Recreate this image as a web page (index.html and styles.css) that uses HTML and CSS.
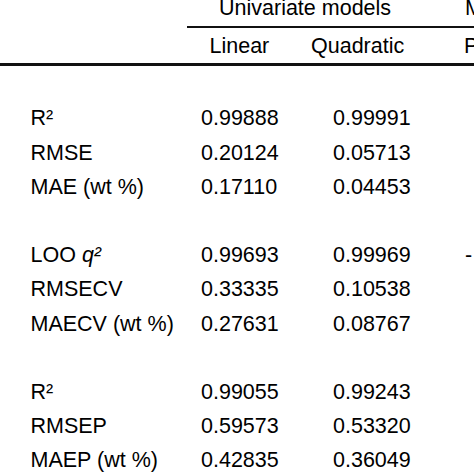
FILE: index.html
```html
<!DOCTYPE html>
<html>
<head>
<meta charset="utf-8">
<link rel="stylesheet" href="styles.css">
</head>
<body>
<div class="table">
  <div class="hrow1">
    <div class="span-head">
      <span class="uni">Univariate models</span>
      <span class="multi">Multivariate models</span>
    </div>
  </div>
  <div class="hrow2">
    <span class="h-label"></span>
    <span class="h-lin">Linear</span>
    <span class="h-quad">Quadratic</span>
    <span class="h-third">PLS</span>
  </div>
  <div class="tbody">
    <div class="gap first"></div>
    <div class="row"><span class="c-label">R²</span><span class="c-lin">0.99888</span><span class="c-quad">0.99991</span><span class="c-third"></span></div>
    <div class="row"><span class="c-label">RMSE</span><span class="c-lin">0.20124</span><span class="c-quad">0.05713</span><span class="c-third"></span></div>
    <div class="row"><span class="c-label">MAE (wt %)</span><span class="c-lin">0.17110</span><span class="c-quad">0.04453</span><span class="c-third"></span></div>
    <div class="gap"></div>
    <div class="row"><span class="c-label">LOO <i>q²</i></span><span class="c-lin">0.99693</span><span class="c-quad">0.99969</span><span class="c-third">-</span></div>
    <div class="row"><span class="c-label">RMSECV</span><span class="c-lin">0.33335</span><span class="c-quad">0.10538</span><span class="c-third"></span></div>
    <div class="row"><span class="c-label">MAECV (wt %)</span><span class="c-lin">0.27631</span><span class="c-quad">0.08767</span><span class="c-third faint">·</span></div>
    <div class="gap"></div>
    <div class="row"><span class="c-label">R²</span><span class="c-lin">0.99055</span><span class="c-quad">0.99243</span><span class="c-third"></span></div>
    <div class="row"><span class="c-label">RMSEP</span><span class="c-lin">0.59573</span><span class="c-quad">0.53320</span><span class="c-third"></span></div>
    <div class="row"><span class="c-label">MAEP (wt %)</span><span class="c-lin">0.42835</span><span class="c-quad">0.36049</span><span class="c-third"></span></div>
  </div>
</div>
</body>
</html>
```
FILE: styles.css
```css
html, body {
  margin: 0;
  padding: 0;
  background: #fff;
  overflow: hidden;
}
body {
  width: 474px;
  height: 474px;
}
.table {
  width: 474px;
  font-family: "Liberation Sans", Arial, sans-serif;
  font-size: 21.5px;
  color: #000;
  white-space: nowrap;
  overflow: hidden;
}
.hrow1 {
  display: flex;
}
.span-head {
  margin-left: 187px;
  flex: 1;
  display: flex;
  line-height: 16px;
  padding-bottom: 10px;
  border-bottom: 2px solid #111;
}
.uni {
  width: 277px;
  padding-left: 32px;
  box-sizing: border-box;
  flex: none;
}
.multi {
  padding-left: 1px;
}
.hrow2 {
  display: flex;
  line-height: 34px;
  padding-top: 1px;
  border-bottom: 3px solid #111;
}
.h-label { width: 209.5px; flex: none; }
.h-lin { width: 101.5px; flex: none; }
.h-quad { width: 153px; flex: none; }
.h-third { flex: none; }
.gap { height: 34.2px; }
.gap.first { height: 35.4px; }
.row {
  display: flex;
  line-height: 34.2px;
}
.c-label {
  width: 201px;
  padding-left: 30.5px;
  box-sizing: border-box;
  flex: none;
}
.c-lin { width: 132px; flex: none; }
.c-quad { width: 131px; flex: none; }
.c-third { flex: none; padding-left: 1px; }
.faint {
  color: #ddd;
  padding-left: 8px;
}
```
